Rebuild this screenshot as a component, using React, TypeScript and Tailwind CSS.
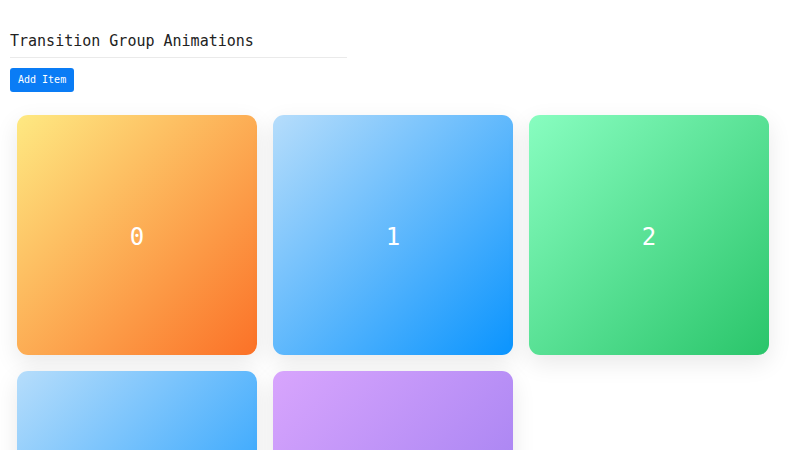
import React from 'react';

const MONO = "font-['DejaVu_Sans_Mono',monospace]";

const ITEMS = [
  { id: 0, bg: 'bg-[linear-gradient(135deg,#fee982_0%,#fb7127_100%)]' },
  { id: 1, bg: 'bg-[linear-gradient(135deg,#b6ddfb_0%,#0a94fe_100%)]' },
  { id: 2, bg: 'bg-[linear-gradient(135deg,#88fdc0_0%,#2ac56a_100%)]' },
  { id: 3, bg: 'bg-[linear-gradient(135deg,#b6ddfb_0%,#0a94fe_100%)]' },
  { id: 4, bg: 'bg-[linear-gradient(135deg,#d8a5fd_0%,#9879ef_100%)]' },
];

export default function App() {
  return (
    <div className={`${MONO} min-h-screen bg-white text-[#222]`}>
      <div className="px-[10px] pt-[30px]">
        <h1 className="w-[337px] border-b border-[#eaeaea] pb-[5px] text-[15px] leading-[22px] font-normal">
          Transition Group Animations
        </h1>
        <button className="mt-[10px] h-[24px] rounded-[3px] bg-[#0a7cf5] px-[8px] text-[10px] leading-[24px] text-white">
          Add Item
        </button>
      </div>
      <div className="grid grid-cols-[240px_240px_240px] gap-[16px] px-[17px] pt-[23px] pb-10">
        {ITEMS.map((item) => (
          <div
            key={item.id}
            className={`${item.bg} flex h-[240px] items-center justify-center rounded-[11px] pt-[4px] text-[24px] text-white shadow-[0_8px_24px_rgba(0,0,0,0.09)]`}
          >
            {item.id}
          </div>
        ))}
      </div>
    </div>
  );
}
